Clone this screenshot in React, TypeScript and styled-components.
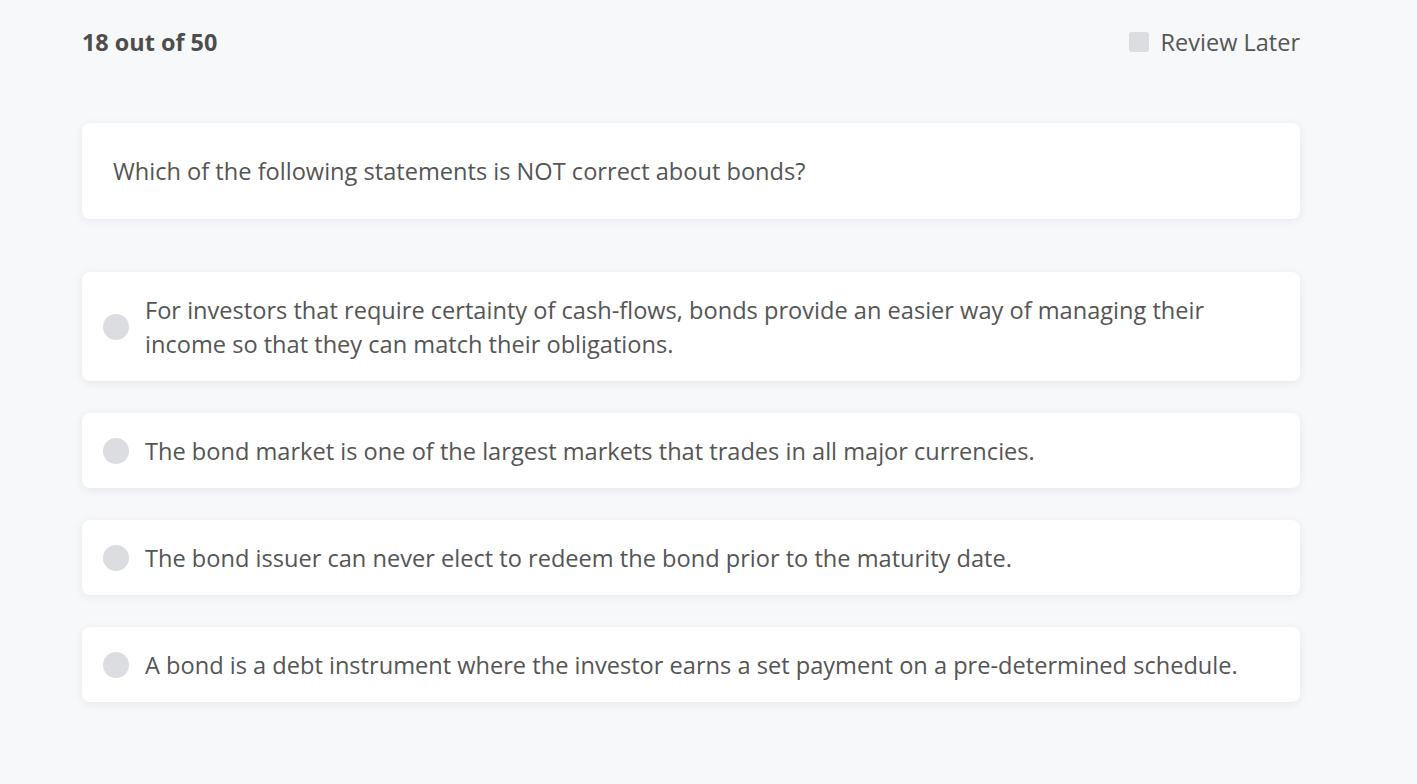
import React from "react";
import styled, { createGlobalStyle } from "styled-components";

const GlobalStyle = createGlobalStyle`
  html, body {
    margin: 0;
    padding: 0;
    background: #f7f8fa;
    font-family: "Open Sans", "Noto Sans", sans-serif;
    color: #505050;
  }
  * { box-sizing: border-box; }
`;

const Page = styled.div`
  width: 1218px;
  margin-left: 82px;
  padding-top: 27px;
  padding-bottom: 40px;
`;

const Header = styled.div`
  display: flex;
  justify-content: space-between;
  align-items: center;
  height: 30px;
`;

const Counter = styled.div`
  font-size: 23.4px;
  font-weight: 700;
  line-height: 30px;
  color: #4d4d4d;
`;

const ReviewLabel = styled.label`
  display: flex;
  align-items: center;
  gap: 12px;
  font-size: 23.5px;
  line-height: 30px;
  color: #555;
  cursor: pointer;
`;

const CheckBox = styled.span`
  width: 20px;
  height: 20px;
  border-radius: 3px;
  background: #dcdde0;
`;

const Card = styled.div`
  background: #fff;
  border-radius: 8px;
  box-shadow: 0 2px 10px rgba(30, 40, 60, 0.08);
`;

const QuestionCard = styled(Card)`
  margin-top: 66px;
  padding: 31px;
  font-size: 23.6px;
  line-height: 34px;
  color: #555;
`;

const Options = styled.div`
  margin-top: 53px;
  display: flex;
  flex-direction: column;
  gap: 32px;
`;

const OptionCard = styled(Card)`
  display: flex;
  align-items: center;
  gap: 16px;
  padding: 20.5px 40px 20.5px 21px;
  cursor: pointer;
`;

const Radio = styled.span`
  flex: 0 0 26px;
  width: 26px;
  height: 26px;
  border-radius: 50%;
  background: #dcdde0;
`;

const OptionText = styled.div`
  font-size: 23.6px;
  line-height: 34px;
  color: #555;
`;

const options = [
  "For investors that require certainty of cash-flows, bonds provide an easier way of managing their income so that they can match their obligations.",
  "The bond market is one of the largest markets that trades in all major currencies.",
  "The bond issuer can never elect to redeem the bond prior to the maturity date.",
  "A bond is a debt instrument where the investor earns a set payment on a pre-determined schedule.",
];

export default function App() {
  return (
    <>
      <GlobalStyle />
      <Page>
        <Header>
          <Counter>18 out of 50</Counter>
          <ReviewLabel>
            <CheckBox />
            Review Later
          </ReviewLabel>
        </Header>
        <QuestionCard>Which of the following statements is NOT correct about bonds?</QuestionCard>
        <Options>
          {options.map((o) => (
            <OptionCard key={o}>
              <Radio />
              <OptionText>{o}</OptionText>
            </OptionCard>
          ))}
        </Options>
      </Page>
    </>
  );
}
